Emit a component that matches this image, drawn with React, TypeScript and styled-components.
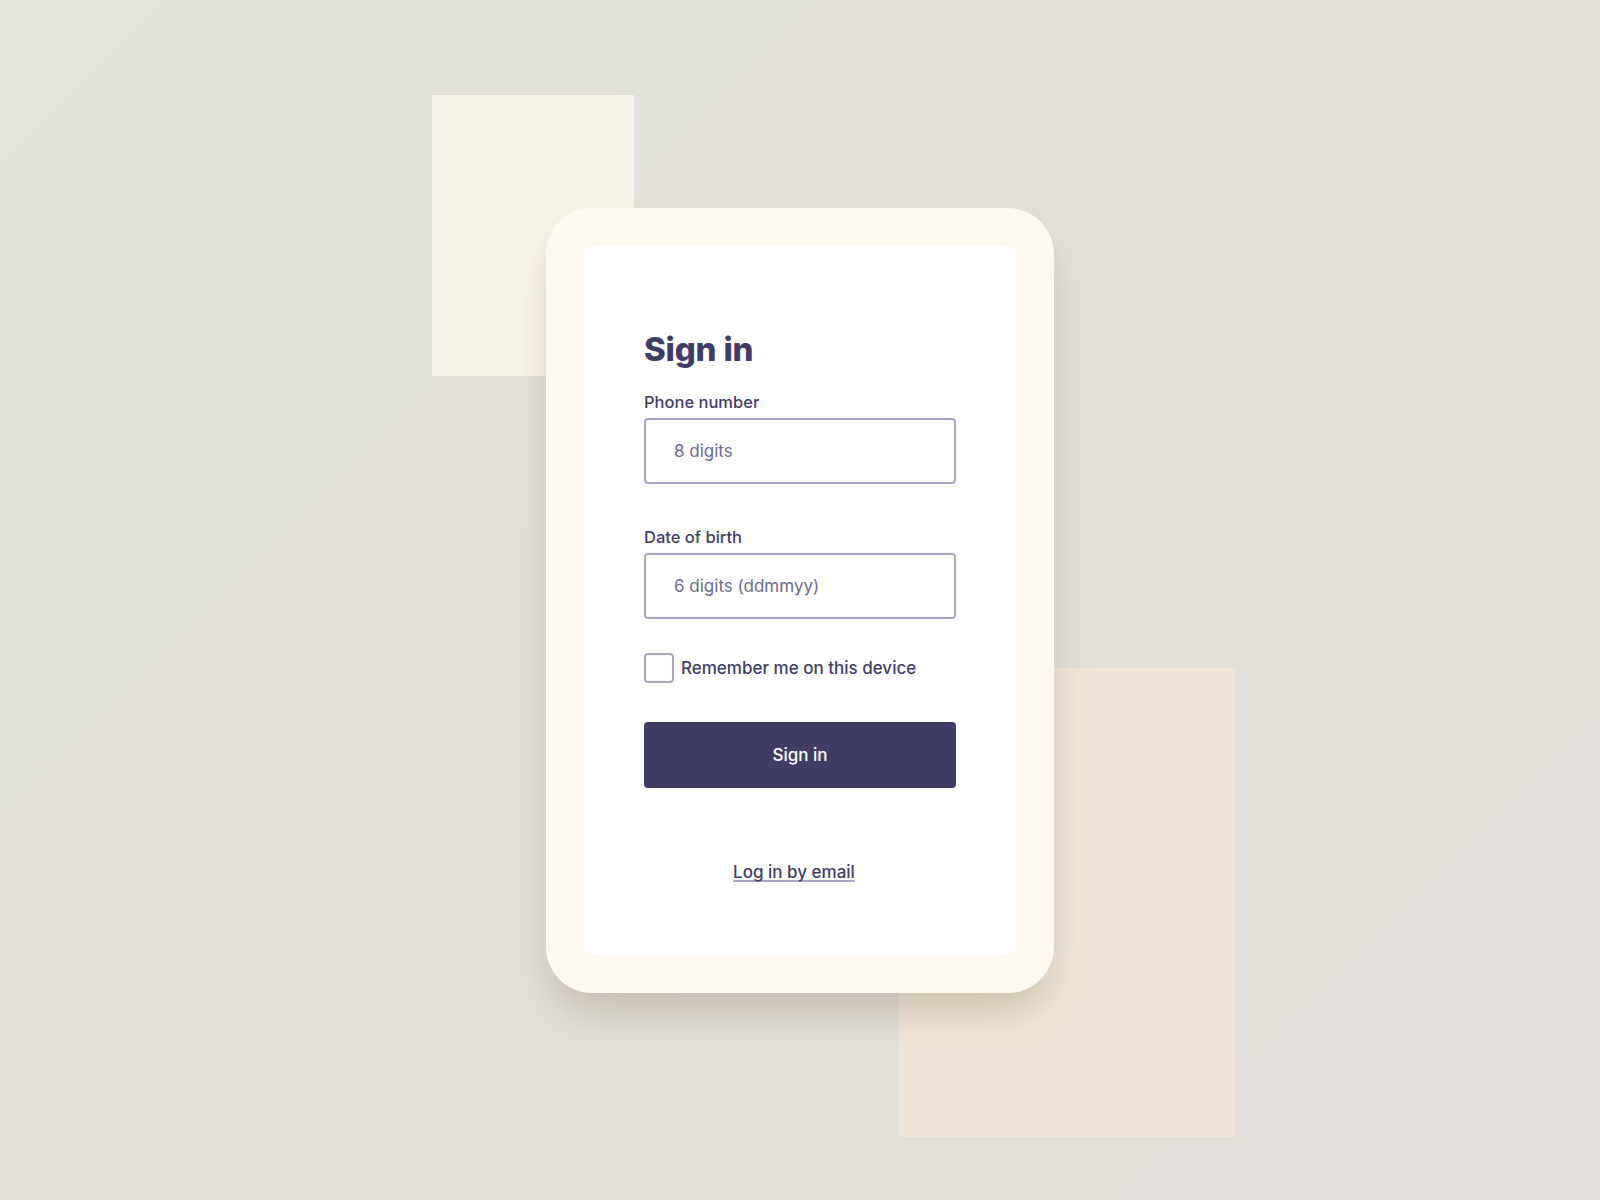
import styled, { createGlobalStyle } from 'styled-components';

const Colors = {
  ink: '#3f3d66',
  placeholder: '#6d6a8e',
  line: '#a9a5c6',
  shell: '#fdf8f0',
};

const GlobalStyle = createGlobalStyle`
  html, body {
    margin: 0;
    padding: 0;
  }

  body {
    font-family: Inter, 'Noto Sans', sans-serif;
    color: ${Colors.ink};
  }

  * {
    box-sizing: border-box;
  }
`;

const SignIn = () => {
  return (
    <Page>
      <GlobalStyle />
      <Stage>
        <Decor $left={-114} $top={-113} $width={202} $height={281} $color='#f7f3e7' />
        <Decor $left={353} $top={460} $width={336} $height={469} $color='#f2e6da' />
        <Shell>
          <Sheet>
            <Title>Sign in</Title>

            <Label htmlFor='phone'>Phone number</Label>
            <Input id='phone' placeholder='8 digits' inputMode='numeric' />

            <Label htmlFor='dob' $gap={43}>
              Date of birth
            </Label>
            <Input id='dob' placeholder='6 digits (ddmmyy)' inputMode='numeric' />

            <Remember>
              <Checkbox type='checkbox' />
              <span>Remember me on this device</span>
            </Remember>

            <SubmitButton type='button'>Sign in</SubmitButton>

            <EmailLink href='#'>Log in by email</EmailLink>
          </Sheet>
        </Shell>
      </Stage>
    </Page>
  );
};

const Page = styled.main`
  min-height: 100vh;
  display: flex;
  align-items: center;
  justify-content: center;
  background: linear-gradient(135deg, #e2e3da 0%, #e3e0d9 55%, #e3ded9 100%);
  overflow: hidden;
`;

const Stage = styled.div`
  position: relative;
  width: 508px;
  height: 785px;
`;

const Decor = styled.div<{
  $left: number;
  $top: number;
  $width: number;
  $height: number;
  $color: string;
}>`
  position: absolute;
  left: ${(p) => p.$left}px;
  top: ${(p) => p.$top}px;
  width: ${(p) => p.$width}px;
  height: ${(p) => p.$height}px;
  background: ${(p) => p.$color};
`;

const Shell = styled.section`
  position: relative;
  width: 100%;
  height: 100%;
  padding: 38px;
  border-radius: 46px;
  background: ${Colors.shell};
  box-shadow: 0 24px 40px -6px rgba(140, 125, 90, 0.36);
`;

const Sheet = styled.div`
  height: 100%;
  display: flex;
  flex-direction: column;
  padding: 83px 60px 0;
  border-radius: 14px;
  background: #ffffff;
`;

const Title = styled.h1`
  margin: 0 0 23px;
  font-size: 33px;
  line-height: 40px;
  font-weight: 800;
  letter-spacing: -0.2px;
  color: ${Colors.ink};
`;

const Label = styled.label<{ $gap?: number }>`
  display: block;
  margin: ${(p) => p.$gap ?? 0}px 0 6px;
  font-size: 16.5px;
  line-height: 20px;
  font-weight: 500;
  color: ${Colors.ink};
`;

const Input = styled.input`
  display: block;
  width: 100%;
  height: 66px;
  padding: 0 28px;
  border: 2px solid ${Colors.line};
  border-radius: 4px;
  font-family: inherit;
  font-size: 17px;
  color: ${Colors.ink};
  background: #ffffff;
  outline: none;

  &::placeholder {
    color: ${Colors.placeholder};
    opacity: 1;
  }
`;

const Remember = styled.label`
  display: flex;
  align-items: center;
  gap: 7px;
  margin-top: 34px;
  font-size: 17px;
  line-height: 22px;
  font-weight: 500;
  color: ${Colors.ink};
  cursor: pointer;
`;

const Checkbox = styled.input`
  appearance: none;
  margin: 0;
  width: 30px;
  height: 30px;
  flex-shrink: 0;
  border: 2px solid ${Colors.line};
  border-radius: 4px;
  background: #ffffff;
`;

const SubmitButton = styled.button`
  margin-top: 39px;
  width: 100%;
  height: 66px;
  border: none;
  border-radius: 4px;
  background: ${Colors.ink};
  color: #ffffff;
  font-family: inherit;
  font-size: 17px;
  font-weight: 500;
  cursor: pointer;
`;

const EmailLink = styled.a`
  align-self: center;
  margin: 74px 12px 0 0;
  font-size: 17px;
  line-height: 20px;
  font-weight: 500;
  color: ${Colors.ink};
  text-decoration: underline;
  text-decoration-color: ${Colors.line};
  text-decoration-thickness: 2px;
  text-decoration-skip-ink: none;
  text-underline-offset: 2px;
`;

export default SignIn;
